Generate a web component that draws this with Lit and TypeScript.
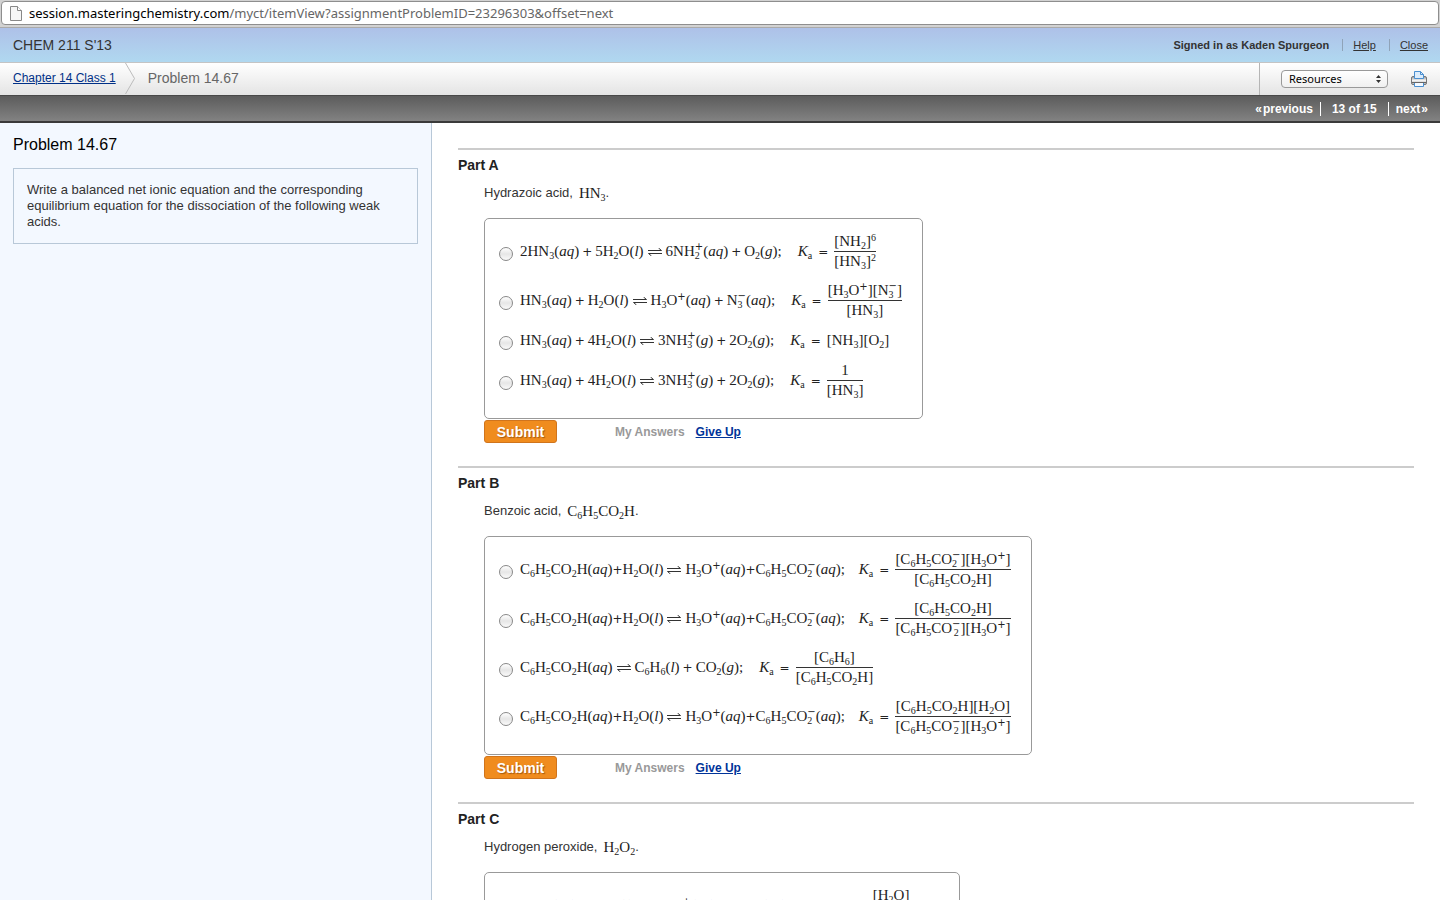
import { LitElement, html, css, TemplateResult } from "lit";
import { customElement, property, state } from "lit/decorators.js";

/**
 * Chemical formula notation:
 *   _x  subscript, ^x  superscript, _x^y  both stacked
 *   ~x~ italic, " + " spaced plus, "<>" equilibrium arrow
 */
@customElement("chem-math")
export class ChemMath extends LitElement {
  static styles = css`
    :host {
      display: inline-block;
      font: 15px/18px "Liberation Serif", serif;
      color: #222;
      white-space: nowrap;
    }
    .stack {
      display: inline-flex;
      flex-direction: column;
      vertical-align: top;
      font-size: 10px;
      line-height: 9px;
    }
    .sub {
      font-size: 10px;
      line-height: 0;
      vertical-align: -3px;
    }
    .sup {
      font-size: 10px;
      line-height: 0;
      vertical-align: 5px;
    }
    .sign {
      font-family: "DejaVu Sans", sans-serif;
    }
    .big {
      font: 12px/1 "DejaVu Sans", sans-serif;
      line-height: 0;
    }
    .op {
      margin: 0 3px;
    }
    .eq {
      margin: 0 6px;
    }
    .arrow {
      width: 14px;
      height: 8px;
      margin: 0 4px;
    }
    .arrow path {
      fill: none;
      stroke: #333;
    }
  `;

  @property() src = "";

  private small(t: string) {
    const sign = t === "+" || t === "-";
    return { text: t === "-" ? "−" : t, cls: sign ? " sign" : "" };
  }

  render() {
    const out: TemplateResult[] = [];
    const re = /_(.)\^(.)|_(.)|\^(.)|~([^~]+)~|( \+ )|(\+)|(=)|(<>)|([^_^~+=<]+?(?= \+ |[_^~+=<]|$))/g;
    let m: RegExpExecArray | null;
    while ((m = re.exec(this.src))) {
      if (m[1]) {
        const s = this.small(m[2]);
        out.push(html`<span class="stack"><span class=${s.cls}>${s.text}</span><span>${m[1]}</span></span>`);
      } else if (m[3]) out.push(html`<span class="sub">${m[3]}</span>`);
      else if (m[4]) {
        const s = this.small(m[4]);
        out.push(html`<span class=${"sup" + s.cls}>${s.text}</span>`);
      } else if (m[5]) out.push(html`<i>${m[5]}</i>`);
      else if (m[6]) out.push(html`<span class="op big">+</span>`);
      else if (m[7]) out.push(html`<span class="big">+</span>`);
      else if (m[8]) out.push(html`<span class="eq big">=</span>`);
      else if (m[9])
        out.push(html`<svg class="arrow" viewBox="0 0 14 8" role="img" aria-label="in equilibrium with">
          <path d="M0 2.5H13.5L10.5 0M14 5.5H.5L3.500 8" />
        </svg>`);
      else out.push(html`<span>${m[10]}</span>`);
    }
    return html`${out}`;
  }
}

interface Choice {
  eq: string;
  wide?: boolean;
  num: string;
  den?: string;
}
interface Part {
  id: string;
  name: string;
  formula: string;
  choices: Choice[];
}

const benzoic = "C_6H_5CO_2H(~aq~)+H_2O(~l~)<>H_3O^+(~aq~)+C_6H_5CO_2^-(~aq~);";
const peroxide = "H_2O_2(~aq~) + H_2O(~l~)<>H_3O^+(~aq~) + HO_2^-(~aq~);";

const PARTS: Part[] = [
  {
    id: "A",
    name: "Hydrazoic acid,",
    formula: "HN_3",
    choices: [
      { eq: "2HN_3(~aq~) + 5H_2O(~l~)<>6NH_2^+(~aq~) + O_2(~g~);", wide: true, num: "[NH_2]^6", den: "[HN_3]^2" },
      { eq: "HN_3(~aq~) + H_2O(~l~)<>H_3O^+(~aq~) + N_3^-(~aq~);", wide: true, num: "[H_3O^+][N_3^-]", den: "[HN_3]" },
      { eq: "HN_3(~aq~) + 4H_2O(~l~)<>3NH_3^+(~g~) + 2O_2(~g~);", wide: true, num: "[NH_3][O_2]" },
      { eq: "HN_3(~aq~) + 4H_2O(~l~)<>3NH_3^+(~g~) + 2O_2(~g~);", wide: true, num: "1", den: "[HN_3]" },
    ],
  },
  {
    id: "B",
    name: "Benzoic acid,",
    formula: "C_6H_5CO_2H",
    choices: [
      { eq: benzoic, num: "[C_6H_5CO_2^-][H_3O^+]", den: "[C_6H_5CO_2H]" },
      { eq: benzoic, num: "[C_6H_5CO_2H]", den: "[C_6H_5CO_2^-][H_3O^+]" },
      { eq: "C_6H_5CO_2H(~aq~)<>C_6H_6(~l~) + CO_2(~g~);", wide: true, num: "[C_6H_6]", den: "[C_6H_5CO_2H]" },
      { eq: benzoic, num: "[C_6H_5CO_2H][H_2O]", den: "[C_6H_5CO_2^-][H_3O^+]" },
    ],
  },
  {
    id: "C",
    name: "Hydrogen peroxide,",
    formula: "H_2O_2",
    choices: [
      { eq: peroxide, wide: true, num: "[H_2O]", den: "[H_3O^+]^2[HO_2^-]^2" },
      { eq: peroxide, wide: true, num: "[H_3O^+][HO_2^-]", den: "[H_2O_2]" },
    ],
  },
];

@customElement("problem-part")
export class ProblemPart extends LitElement {
  static styles = css`
    :host {
      display: block;
      border-top: 2px solid #ccc;
      padding-bottom: 23px;
    }
    h2 {
      margin: 6px 0 10px;
      font-size: 14px;
      line-height: 18px;
      color: #222;
    }
    .body {
      padding-left: 26px;
    }
    .intro {
      display: flex;
      align-items: center;
      margin: 0 0 16px;
      line-height: 18px;
    }
    .intro chem-math {
      margin-left: 6px;
    }
    .choices {
      box-sizing: border-box;
      width: fit-content;
      margin: 0;
      padding: 13px 20px 19px 14px;
      border: 1px solid #999;
      border-radius: 5px;
      display: grid;
      gap: 11px;
    }
    label {
      display: flex;
      align-items: center;
      min-height: 20px;
    }
    input {
      appearance: none;
      box-sizing: border-box;
      width: 14px;
      height: 14px;
      margin: 5px 7px 0 0;
      border: 1px solid #888;
      border-radius: 50%;
      background: linear-gradient(#fff, #e6e6e6 50%, #fafafa);
      flex: none;
    }
    input:checked {
      background: radial-gradient(#333 3px, #eee 4px);
    }
    .k {
      margin-left: 14px;
    }
    .wide .k {
      margin-left: 16px;
    }
    .frac {
      display: flex;
      flex-direction: column;
      align-items: center;
    }
    .frac chem-math {
      height: 19px;
    }
    .frac chem-math + chem-math {
      align-self: stretch;
      text-align: center;
      border-top: 1px solid #333;
      height: 18px;
    }
    .actions {
      display: flex;
      align-items: center;
      margin-top: 1px;
      font-weight: bold;
      font-size: 12px;
    }
    button {
      height: 23px;
      width: 73px;
      padding: 0;
      border: 1px solid #d0741c;
      border-radius: 3px;
      background: #f08c1e;
      color: #fff;
      font: bold 14px "Liberation Sans", sans-serif;
      text-shadow: 1px 1px 1px #a55a10;
    }
    .mine {
      margin: 0 11px 0 58px;
      color: #999;
    }
    a {
      color: #003399;
    }
  `;

  @property({ attribute: false }) part!: Part;

  render() {
    const p = this.part;
    return html`
      <h2>Part ${p.id}</h2>
      <div class="body">
        <p class="intro"><span>${p.name}</span><chem-math src=${p.formula}></chem-math><span>.</span></p>
        <div class="choices" role="radiogroup" aria-label=${"Part " + p.id}>
          ${p.choices.map(
            (c, i) => html`<label class=${c.wide ? "wide" : ""}>
              <input type="radio" name="answer" value=${i} />
              <chem-math src=${c.eq}></chem-math>
              <chem-math class="k" src="~K~_a="></chem-math>
              ${c.den
                ? html`<span class="frac"><chem-math src=${c.num}></chem-math><chem-math src=${c.den}></chem-math></span>`
                : html`<chem-math src=${c.num}></chem-math>`}
            </label>`
          )}
        </div>
        <div class="actions">
          <button type="button">Submit</button>
          <span class="mine">My Answers</span>
          <a href="#give-up">Give Up</a>
        </div>
      </div>
    `;
  }
}

@customElement("app-root")
export class AppRoot extends LitElement {
  static styles = css`
    :host {
      display: flex;
      flex-direction: column;
      height: 100vh;
      overflow: hidden;
      background: #fff;
      font: 13px/16px "Liberation Sans", Arial, sans-serif;
      color: #333;
    }
    .browser {
      flex: none;
      box-sizing: border-box;
      height: 28px;
      padding: 1px 1px 2px;
      background: #d2d2d2;
      border-bottom: 1px solid #aaa;
    }
    .address {
      box-sizing: border-box;
      height: 24px;
      padding-left: 8px;
      display: flex;
      align-items: center;
      border: 1px solid #8e8e8e;
      border-radius: 4px;
      background: #fff;
      font: 13px/20px "Noto Sans", sans-serif;
      color: #666;
    }
    .address svg {
      margin-right: 7px;
    }
    .host {
      color: #000;
    }
    .course {
      flex: none;
      box-sizing: border-box;
      height: 35px;
      padding: 0 12px 0 13px;
      display: flex;
      align-items: center;
      justify-content: space-between;
      background: linear-gradient(#aec1e8, #b0d8f0);
      border-bottom: 1px solid #c4c4c4;
      font-size: 14px;
    }
    .user {
      display: flex;
      align-items: center;
      font-size: 11px;
      line-height: 12px;
    }
    .user a {
      color: #333;
      margin-left: 13px;
      padding-left: 10px;
      border-left: 1px solid #8fa3b8;
    }
    .crumbs {
      flex: none;
      height: 32px;
      padding-left: 13px;
      display: flex;
      align-items: stretch;
      background: linear-gradient(#fff, #e4e4e4);
      line-height: 30px;
    }
    .crumbs a {
      color: #003087;
      font-size: 12px;
    }
    .crumbs svg {
      margin: 0 13px 0 9px;
    }
    .current {
      flex: 1;
      font-size: 14px;
      color: #666;
    }
    .tools {
      display: flex;
      align-items: center;
      padding: 0 13px 0 21px;
      border-left: 1px solid #b5b5b5;
    }
    .pick {
      position: relative;
      display: flex;
    }
    .pick svg {
      position: absolute;
      right: 7px;
      top: 5px;
      margin: 0;
      pointer-events: none;
    }
    select {
      appearance: none;
      box-sizing: border-box;
      width: 107px;
      height: 18px;
      padding: 0 7px;
      border: 1px solid #999;
      border-radius: 4px;
      background: linear-gradient(#fff, #f0f0f0);
      font: 11px/16px "Noto Sans", sans-serif;
      color: #000;
    }
    .print {
      display: flex;
      margin-left: 23px;
      padding: 0;
      border: 0;
      background: none;
    }
    .print svg {
      margin: 0;
    }
    .pager {
      flex: none;
      box-sizing: border-box;
      height: 28px;
      padding-right: 12px;
      display: flex;
      align-items: center;
      justify-content: flex-end;
      background: linear-gradient(#5c5c5c, #828282);
      border-top: 1px solid #484848;
      border-bottom: 2px solid #3a3a3a;
      font-weight: bold;
      font-size: 12px;
      line-height: 14px;
      color: #fff;
    }
    .pager a {
      display: flex;
      gap: 1px;
      color: #fff;
      text-decoration: none;
    }
    .count {
      margin: 0 7px;
      padding: 0 11px;
      border: solid #fff;
      border-width: 0 1px;
    }
    .main {
      flex: 1;
      min-height: 0;
      display: grid;
      grid-template-columns: 30% 1fr;
    }
    .side {
      box-sizing: border-box;
      padding: 12px 13px;
      background: #f3f8ff;
      border-right: 1px solid #b8c8d8;
    }
    h1 {
      margin: 0 0 14px;
      font-size: 16px;
      line-height: 19px;
      font-weight: normal;
      color: #000;
    }
    .prompt {
      margin: 0;
      padding: 13px;
      border: 1px solid #b8c8d8;
    }
    .parts {
      overflow: hidden;
      padding: 25px 26px 0;
    }
  `;

  @state() private parts = PARTS;

  render() {
    return html`
      <div class="browser">
        <div class="address">
          <svg width="12" height="15" viewBox="0 0 12 15" aria-hidden="true">
            <path d="M.5.5H7.500L11.500 4.500V14.500H.5Z" fill="#f6f6f6" stroke="#888" />
            <path d="M7.500.5V4.500H11.500" fill="#fff" stroke="#888" />
          </svg>
          <span class="host">session.masteringchemistry.com</span
          ><span>/myct/itemView?assignmentProblemID=23296303&amp;offset=next</span>
        </div>
      </div>
      <header class="course">
        <span>CHEM 211 S'13</span>
        <div class="user">
          <b>Signed in as Kaden Spurgeon</b>
          <a href="#help">Help</a>
          <a href="#close">Close</a>
        </div>
      </header>
      <nav class="crumbs">
        <a href="#chapter">Chapter 14 Class 1</a>
        <svg width="10" height="32" viewBox="0 0 10 32" aria-hidden="true">
          <path d="M.5 0L9.500 15.500L.5 31" fill="none" stroke="#bbb" />
        </svg>
        <span class="current">Problem 14.67</span>
        <div class="tools">
          <div class="pick">
            <select aria-label="Resources">
              <option>Resources</option>
            </select>
            <svg width="5" height="8" viewBox="0 0 5 8" aria-hidden="true">
              <path d="M2.500 0L5 3H0ZM2.500 8L5 5H0Z" fill="#333" />
            </svg>
          </div>
          <button class="print" type="button" aria-label="Print">
            <svg width="16" height="16" viewBox="0 0 16 16">
              <defs>
                <linearGradient id="body" x2="0" y2="1">
                  <stop offset="0" stop-color="#9a9a9a" />
                  <stop offset=".5" stop-color="#f2f2f2" />
                  <stop offset="1" stop-color="#b0b0b0" />
                </linearGradient>
              </defs>
              <rect x=".5" y="5.500" width="15" height="8" rx="1.500" fill="url(#body)" stroke="#777" />
              <path d="M3.500 7.500V.5H9.500L12.500 3.500V7.500Z" fill="#dcecfb" stroke="#4a8fd0" />
              <path d="M9.500.5V3.500H12.500" fill="none" stroke="#4a8fd0" />
              <path d="M1 11.500H15" stroke="#666" />
              <path d="M3.500 12V15.500H12.500V12" fill="#f4f9ff" stroke="#4a8fd0" />
            </svg>
          </button>
        </div>
      </nav>
      <nav class="pager">
        <a href="#previous"><span>«</span> <span>previous</span></a>
        <span class="count">13 of 15</span>
        <a href="#next"><span>next</span> <span>»</span></a>
      </nav>
      <div class="main">
        <aside class="side">
          <h1>Problem 14.67</h1>
          <p class="prompt">
            Write a balanced net ionic equation and the corresponding equilibrium equation for the dissociation of the
            following weak acids.
          </p>
        </aside>
        <main class="parts">${this.parts.map((p) => html`<problem-part .part=${p}></problem-part>`)}</main>
      </div>
    `;
  }
}
